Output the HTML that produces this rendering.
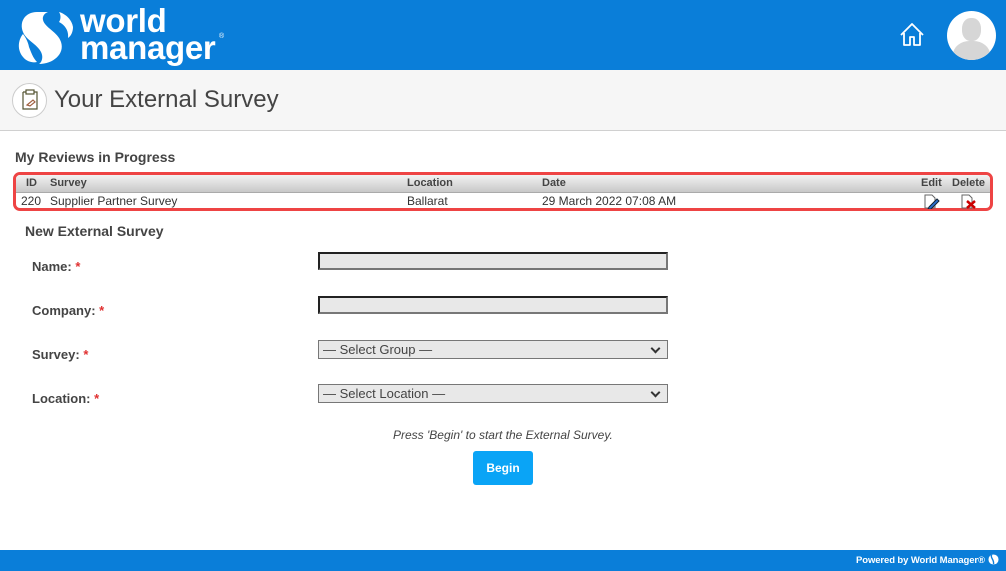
<!DOCTYPE html>
<html><head><meta charset="utf-8"><style>
*{box-sizing:border-box;margin:0;padding:0}
body{width:1006px;height:571px;position:relative;font-family:"Liberation Sans",Arial,sans-serif;background:#fff;color:#333;overflow:hidden}
.hdr{position:absolute;left:0;top:0;width:1006px;height:70px;background:#0a7ed9}
.tb{position:absolute;left:0;top:70px;width:1006px;height:61px;background:#f6f6f6;border-bottom:1px solid #d0d0d0}
.abs{position:absolute}
.lbl{position:absolute;left:32px;font-size:13px;font-weight:bold;color:#444}
.lbl b{color:#e03030}
.inp{position:absolute;left:318px;width:350px;height:18px;background:#e8e8e8;border:2px solid;border-color:#222 #777 #777 #222}
.sel{position:absolute;left:318px;width:350px;height:19px;background:#e8e8e8;border:1px solid #777;font-size:13px;color:#444;padding:1px 4px;line-height:15px}
.sel:after{content:"";position:absolute;right:8px;top:4px;width:5px;height:5px;border-right:2px solid #333;border-bottom:2px solid #333;transform:rotate(45deg)}
.th{position:absolute;top:177px;font-size:11px;font-weight:bold;color:#444}
.td{position:absolute;top:194px;font-size:12px;color:#333}
</style></head><body>
<div class="hdr">
<svg class="abs" style="left:15px;top:10px" width="60" height="54" viewBox="0 0 60 54"><path d="M22 2C10 2 4 12 8 22c3 8 14 12 18 20 3 6 0 11-2 12 14 0 26-10 22-22C43 22 30 18 28 10c-1-4 2-7 5-8z M8 24C3 30 2 40 8 47c4 5 10 6 14 5-4-4-6-10-8-15-1-5-3-9-6-13z M44 2c7 2 13 8 14 15 0 5-2 9-5 11 1-7-3-13-9-16 2-3 2-7 0-10z" fill="#fff"/></svg>
<div class="abs" style="left:80px;top:7px;color:#fff;font-size:33px;font-weight:bold;line-height:27px;letter-spacing:-0.3px">world<br>manager</div>
<div class="abs" style="left:219px;top:33px;color:#fff;font-size:7px">®</div>
<svg class="abs" style="left:899px;top:22px" width="26" height="26" viewBox="0 0 26 26" fill="none" stroke="#fff" stroke-width="1.8" stroke-linejoin="round"><path d="M2 13L13 2l11 11M5 11v12h6v-8h4v8h6V11"/></svg>
<div class="abs" style="left:947px;top:11px;width:49px;height:49px;border-radius:50%;background:#fff;overflow:hidden">
<div class="abs" style="left:15px;top:7px;width:19px;height:23px;border-radius:45%;background:#d6d6d6"></div>
<div class="abs" style="left:6px;top:30px;width:37px;height:30px;border-radius:45% 45% 0 0;background:#d6d6d6"></div></div>
</div>
<div class="tb">
<div class="abs" style="left:12px;top:13px;width:35px;height:35px;border-radius:50%;background:#fff;border:1px solid #ccc"></div>
<svg class="abs" style="left:20px;top:19px" width="20" height="22" viewBox="0 0 20 22" fill="none" stroke="#553" stroke-width="1.2"><path d="M3 3h3M14 3h3v17H3V3"/><rect x="6" y="1" width="8" height="4"/><path d="M7 16l6-5 2 2-5 4z" stroke="#a06040"/></svg>
<div class="abs" style="left:54px;top:16px;font-size:24px;color:#444">Your External Survey</div>
</div>
<div class="abs" style="left:15px;top:149px;font-size:14px;font-weight:bold;color:#444">My Reviews in Progress</div>
<div class="abs" style="left:13px;top:172px;width:980px;height:39px;border:3px solid #ee4444;border-radius:7px;overflow:hidden">
<div class="abs" style="left:0;top:0;width:976px;height:18px;background:linear-gradient(#f2f2f2,#c8c8c8);border-bottom:1px solid #aaa"></div></div>
<div class="th" style="left:26px">ID</div><div class="th" style="left:50px">Survey</div><div class="th" style="left:407px">Location</div><div class="th" style="left:542px">Date</div><div class="th" style="left:921px">Edit</div><div class="th" style="left:952px">Delete</div>
<div class="td" style="left:21px">220</div><div class="td" style="left:50px">Supplier Partner Survey</div><div class="td" style="left:407px">Ballarat</div><div class="td" style="left:542px">29 March 2022 07:08 AM</div>
<svg class="abs" style="left:924px;top:194px" width="16" height="15" viewBox="0 0 16 15"><path d="M1 1h7l3 3v10H1z" fill="#fff" stroke="#666"/><path d="M5 13l8-8 2 2-8 8-3 0z" fill="#2a6fd0" stroke="#123"/></svg>
<svg class="abs" style="left:961px;top:194px" width="16" height="15" viewBox="0 0 16 15"><path d="M1 1h7l3 3v10H1z" fill="#fff" stroke="#666"/><path d="M6 7l8 7M14 7l-8 7" stroke="#c00" stroke-width="2.5"/></svg>
<div class="abs" style="left:25px;top:223px;font-size:14px;font-weight:bold;color:#444">New External Survey</div>
<div class="lbl" style="top:259px">Name: <b>*</b></div>
<div class="lbl" style="top:303px">Company: <b>*</b></div>
<div class="lbl" style="top:347px">Survey: <b>*</b></div>
<div class="lbl" style="top:391px">Location: <b>*</b></div>
<div class="inp" style="top:252px"></div>
<div class="inp" style="top:296px"></div>
<div class="sel" style="top:340px">— Select Group —</div>
<div class="sel" style="top:384px">— Select Location —</div>
<div class="abs" style="left:393px;top:428px;font-size:12px;font-style:italic;color:#444">Press 'Begin' to start the External Survey.</div>
<div class="abs" style="left:473px;top:451px;width:60px;height:34px;background:#0aa4f6;border-radius:3px;color:#fff;font-size:12px;font-weight:bold;text-align:center;line-height:34px">Begin</div>
<div class="abs" style="left:0;top:550px;width:1006px;height:21px;background:#0a7ed9"></div>
<div class="abs" style="left:856px;top:555px;font-size:9.5px;font-weight:bold;color:#fff;letter-spacing:-0.1px">Powered by World Manager®</div>
<svg class="abs" style="left:988px;top:554px" width="11" height="11" viewBox="0 0 12 12"><circle cx="6" cy="6" r="5.5" fill="#fff"/><path d="M4 1c-2 3 3 5 2 10" stroke="#0a7ed9" stroke-width="1.5" fill="none"/></svg>
</body></html>
